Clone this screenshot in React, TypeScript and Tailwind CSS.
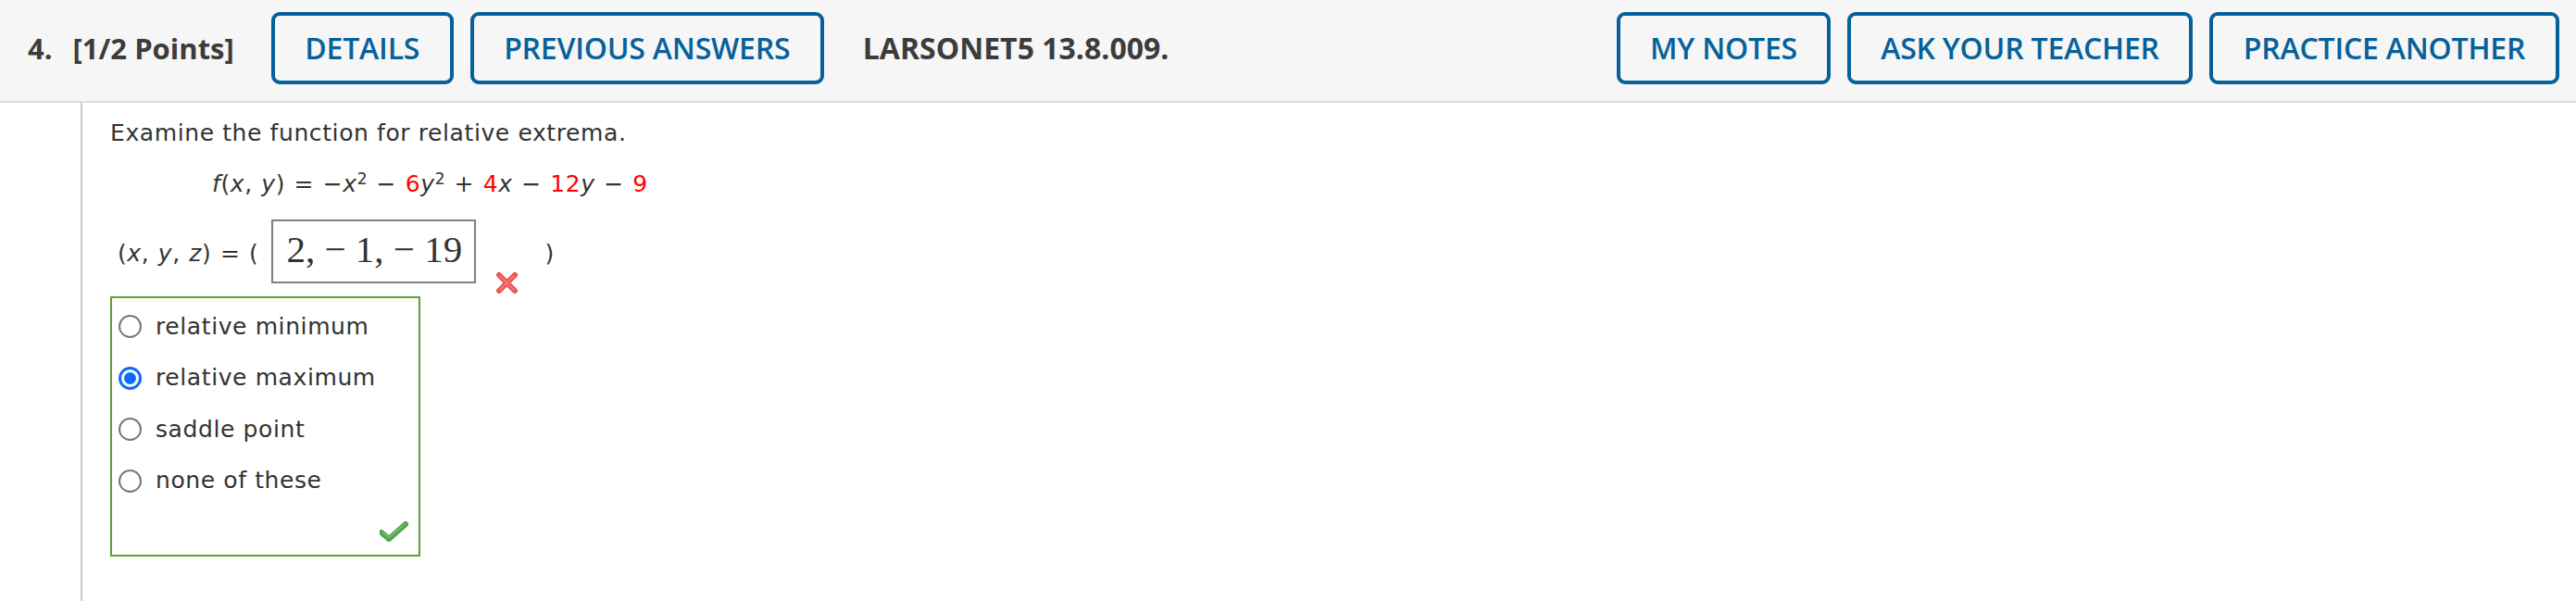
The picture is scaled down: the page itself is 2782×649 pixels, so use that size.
import React from 'react';

const HeaderButton: React.FC<{ label: string; width: string }> = ({ label, width }) => (
  <button
    className={`${width} h-[78px] shrink-0 rounded-[9px] border-4 border-[#06619b] bg-[#f6f6f6] flex items-center justify-center text-[32px] font-semibold tracking-[-0.2px] text-[#06619b] font-['Open_Sans',sans-serif]`}
  >
    {label}
  </button>
);

const Radio: React.FC<{ checked?: boolean }> = ({ checked }) =>
  checked ? (
    <span className="w-[25px] h-[25px] shrink-0 rounded-full border-[3px] border-[#0b6cff] bg-white flex items-center justify-center">
      <span className="w-[13px] h-[13px] rounded-full bg-[#0b6cff]" />
    </span>
  ) : (
    <span className="w-[25px] h-[25px] shrink-0 rounded-full border-2 border-[#767676] bg-white" />
  );

const RedCross = () => (
  <svg width="27" height="25" viewBox="0 0 27 25" className="block">
    <g stroke="#ef5050" strokeWidth="6" strokeLinecap="round">
      <line x1="5" y1="4" x2="22" y2="21" />
      <line x1="22" y1="4" x2="5" y2="21" />
    </g>
    <g stroke="#f78787" strokeWidth="2" strokeLinecap="round" opacity="0.7">
      <line x1="6" y1="5" x2="21" y2="20" />
      <line x1="21" y1="5" x2="6" y2="20" />
    </g>
  </svg>
);

const GreenCheck = () => (
  <svg width="31" height="24" viewBox="0 0 31 24" className="block">
    <path d="M2 13 L10 20 L28 4" fill="none" stroke="#4fa54a" strokeWidth="6" strokeLinecap="round" strokeLinejoin="round" />
    <path d="M3 12.5 L10 18.5 L27 4" fill="none" stroke="#7fc97a" strokeWidth="1.5" strokeLinecap="round" opacity="0.8" />
  </svg>
);

const options = [
  { label: 'relative minimum', checked: false },
  { label: 'relative maximum', checked: true },
  { label: 'saddle point', checked: false },
  { label: 'none of these', checked: false },
];

const App: React.FC = () => {
  return (
    <div className="w-[2782px] h-[649px] bg-white overflow-hidden">
      <header className="h-[111px] bg-[#f6f6f6] border-b-2 border-[#dddddd] flex items-center pl-[30px] pr-[18px] pb-[5px] font-['Open_Sans',sans-serif]">
        <span className="text-[31px] font-bold text-[#3c3c3c]">4.</span>
        <span className="ml-[22px] text-[31px] font-bold text-[#3c3c3c]">[1/2 Points]</span>
        <div className="ml-[40px] flex gap-[18px]">
          <HeaderButton label="DETAILS" width="w-[197px]" />
          <HeaderButton label="PREVIOUS ANSWERS" width="w-[382px]" />
        </div>
        <span className="ml-[42px] text-[32px] font-bold text-[#3c3c3c]">LARSONET5 13.8.009.</span>
        <div className="ml-auto flex gap-[18px]">
          <HeaderButton label="MY NOTES" width="w-[231px]" />
          <HeaderButton label="ASK YOUR TEACHER" width="w-[373px]" />
          <HeaderButton label="PRACTICE ANOTHER" width="w-[378px]" />
        </div>
      </header>

      <div className="ml-[87px] h-[538px] border-l-2 border-[#cccccc] pl-[30px] pt-[18px] text-[25px] tracking-[0.6px] leading-[30px] text-[#333333] font-['DejaVu_Sans',Verdana,sans-serif]">
        <p>Examine the function for relative extrema.</p>

        <p className="mt-[25px] ml-[110px] whitespace-pre [word-spacing:1px]">
          <i>f</i>(<i>x</i>, <i>y</i>) = −<i>x</i>
          <sup className="text-[17px]">2</sup> − <span className="text-[#ff0000]">6</span>
          <i>y</i>
          <sup className="text-[17px]">2</sup> + <span className="text-[#ff0000]">4</span>
          <i>x</i> − <span className="text-[#ff0000]">12</span>
          <i>y</i> − <span className="text-[#ff0000]">9</span>
        </p>

        <div className="mt-[23px] ml-[8px] h-[69px] flex items-start">
          <span className="mt-[22px] whitespace-pre [word-spacing:1px]">
            (<i>x</i>, <i>y</i>, <i>z</i>) = (
          </span>
          <div className="ml-[14px] w-[221px] h-[69px] shrink-0 border-2 border-[#808080] pl-[14px] text-[41px] tracking-normal leading-[61px] text-[#333333] font-['Liberation_Serif',serif] whitespace-pre">
            2, − 1, − 19
          </div>
          <span className="ml-[20px] mt-[56px] block leading-none">
            <RedCross />
          </span>
          <span className="ml-[27px] mt-[22px]">)</span>
        </div>

        <div className="mt-[14px] w-[335px] border-2 border-[#5f9e3a] pt-[3px] pb-[13px] pr-[11px]">
          {options.map((o) => (
            <label key={o.label} className="h-[55.5px] flex items-center pl-[7px] gap-[15px]">
              <Radio checked={o.checked} />
              <span>{o.label}</span>
            </label>
          ))}
          <div className="mt-[15px] flex justify-end">
            <GreenCheck />
          </div>
        </div>
      </div>
    </div>
  );
};

export default App;
